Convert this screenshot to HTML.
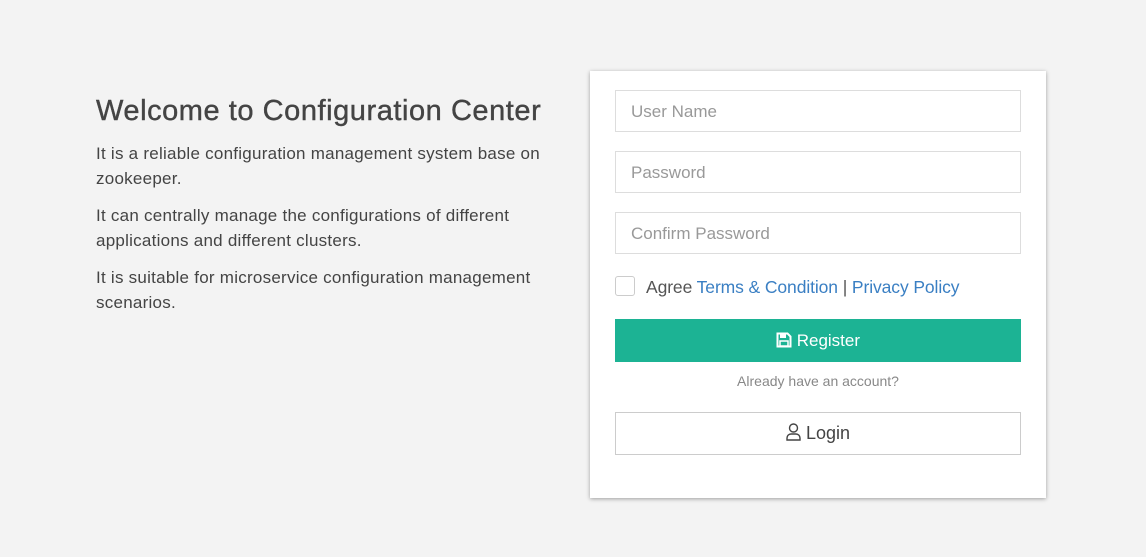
<!DOCTYPE html>
<html><head><style>
body{margin:0;width:1146px;height:557px;background:#f3f3f3;font-family:"Liberation Sans",sans-serif;color:#444;position:relative;overflow:hidden}
.l{position:absolute;left:96px;top:95px;width:470px}
h1{font-size:29px;font-weight:normal;color:#444;margin:0 0 13px;letter-spacing:0.55px;-webkit-text-stroke:0.4px #444}
p{font-size:17px;line-height:25px;margin:0 0 12px;color:#444;letter-spacing:0.25px}
.card{position:absolute;left:590px;top:71px;width:456px;height:427px;background:#fff;box-shadow:0 1px 4px rgba(0,0,0,.35)}
.in{position:absolute;left:25px;border:1px solid #ddd;font-size:17px;color:#999;box-sizing:border-box;width:406px;height:42px;padding:11px 15px}
.cb{position:absolute;left:25px;top:205px;width:20px;height:20px;border:1px solid #ccc;border-radius:3px;box-sizing:border-box}
.ag{position:absolute;left:56px;top:206px;font-size:17.5px;color:#555;letter-spacing:-0.1px}
.ag a{color:#3a7fc3;text-decoration:none}
.reg{position:absolute;left:25px;top:248px;width:406px;height:43px;background:#1cb394;color:#fff;font-size:17px;text-align:center;line-height:43px}
.al{position:absolute;left:25px;width:406px;top:302px;text-align:center;font-size:14px;color:#888}
.log{position:absolute;left:25px;top:341px;width:406px;height:43px;border:1px solid #ccc;box-sizing:border-box;text-align:center;line-height:41px;font-size:18px;color:#444}
svg{vertical-align:-2px}
</style></head><body>
<div class="l">
<h1>Welcome to Configuration Center</h1>
<p>It is a reliable configuration management system base on zookeeper.</p>
<p>It can centrally manage the configurations of different applications and different clusters.</p>
<p>It is suitable for microservice configuration management scenarios.</p>
</div>
<div class="card">
<div class="in" style="top:19px">User Name</div>
<div class="in" style="top:80px">Password</div>
<div class="in" style="top:141px">Confirm Password</div>
<div class="cb"></div>
<div class="ag">Agree <a>Terms &amp; Condition</a> | <a>Privacy Policy</a></div>
<div class="reg"><svg width="16" height="16" viewBox="0 0 16 16"><path d="M1.5 1.5h10l3 3v10h-13z" fill="none" stroke="#fff" stroke-width="2"/><rect x="4" y="2" width="6" height="4" fill="#fff"/><rect x="4" y="9" width="8" height="5" fill="none" stroke="#fff" stroke-width="1.5"/></svg> Register</div>
<div class="al">Already have an account?</div>
<div class="log"><svg width="15" height="18" viewBox="0 0 15 18"><circle cx="7.5" cy="5" r="4" fill="none" stroke="#444" stroke-width="1.4"/><path d="M1 17v-2a4 4 0 0 1 4-4h5a4 4 0 0 1 4 4v2z" fill="none" stroke="#444" stroke-width="1.4"/></svg> Login</div>
</div>
</body></html>
